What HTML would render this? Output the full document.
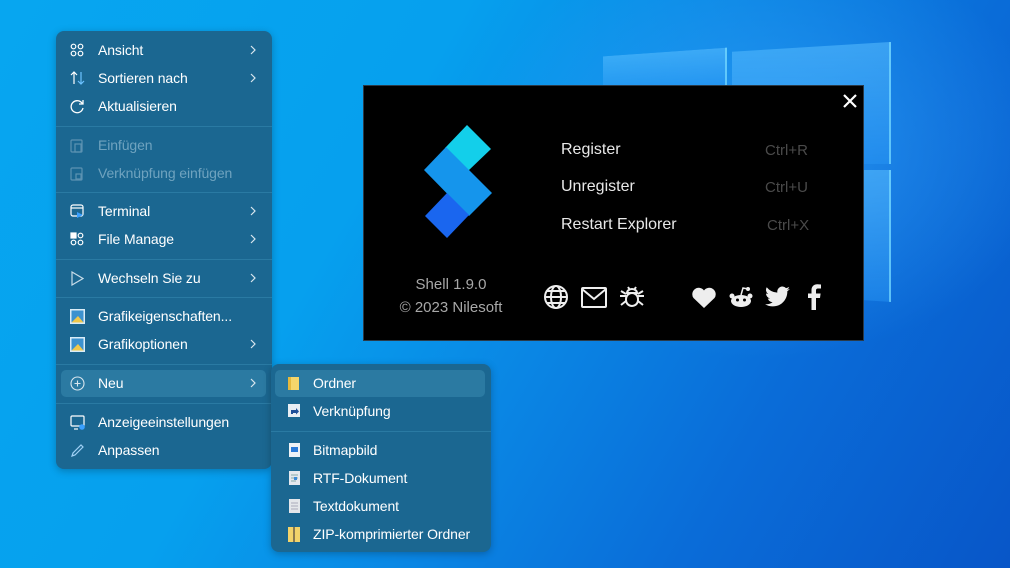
<!DOCTYPE html>
<html><head><meta charset="utf-8"><style>
*{margin:0;padding:0;box-sizing:border-box}
body{width:1010px;height:568px;overflow:hidden;position:relative;font-family:"Liberation Sans",sans-serif;
background:
radial-gradient(ellipse 420px 300px at 760px 150px, rgba(60,170,255,0.55), rgba(0,0,0,0) 70%),
linear-gradient(120deg,#07a6f0 0%,#06a0ee 35%,#0a86e4 55%,#0a6cd8 75%,#0856c8 100%);}
.pane{position:absolute;background:linear-gradient(180deg,rgba(90,190,255,0.55),rgba(40,150,245,0.45));border-right:2px solid rgba(120,220,255,0.7)}
.menu{position:absolute;background:#1b6791;border-radius:8px;box-shadow:0 2px 8px rgba(0,0,0,0.25);color:#fff}
.it{position:absolute;left:0;right:0;height:28px;font-size:14px;line-height:28px;letter-spacing:-0.1px}
.it .t{position:absolute;left:42px}
.it svg{position:absolute;left:14px;top:7px}
.it svg.ch{left:auto;right:16px;top:9px}
.dis{color:#6fa3bf}
.sep{position:absolute;left:0;right:0;height:1px;background:#2a7aa3}
.hl{position:absolute;background:#2b7aa2;border-radius:5px}
.dlg{position:absolute;left:363px;top:85px;width:501px;height:256px;background:#000;border:1px solid #2a3a48}
.dt{position:absolute;color:#e8e8e8;font-size:16px}
.ds{position:absolute;color:#4a4a4a;font-size:15px}
.ic{position:absolute}
</style></head><body>
<div class="pane" style="left:603px;top:52px;width:124px;height:40px;transform:skewY(-4deg)"></div>
<div class="pane" style="left:732px;top:42px;width:159px;height:122px;clip-path:polygon(0 8%,100% 0,100% 100%,0 100%)"></div>
<div class="pane" style="left:732px;top:170px;width:159px;height:132px;clip-path:polygon(0 0,100% 0,100% 100%,0 92%)"></div>

<div class="menu" style="left:56px;top:31px;width:216px;height:438px">
 <div class="it" style="top:5px"><svg width="14" height="14" viewBox="0 0 14 14" fill="none" stroke="#fff" stroke-width="1.2"><circle cx="3.5" cy="3.5" r="2.3"/><circle cx="10.5" cy="3.5" r="2.3"/><circle cx="3.5" cy="10.5" r="2.3"/><circle cx="10.5" cy="10.5" r="2.3"/></svg><span class="t">Ansicht</span><svg class="ch" width="6" height="10" viewBox="0 0 6 10" fill="none" stroke="#d8e6ee" stroke-width="1.2"><path d="M1 1l4 4-4 4"/></svg></div>
 <div class="it" style="top:33px"><svg width="16" height="14" viewBox="0 0 16 14" fill="none" stroke="#fff" stroke-width="1.2"><path d="M4 13V1M1 4l3-3 3 3"/><path d="M11 1v12M8 10l3 3 3-3" stroke="#6cc2ff"/></svg><span class="t">Sortieren nach</span><svg class="ch" width="6" height="10" viewBox="0 0 6 10" fill="none" stroke="#d8e6ee" stroke-width="1.2"><path d="M1 1l4 4-4 4"/></svg></div>
 <div class="it" style="top:61px"><svg width="15" height="15" viewBox="0 0 15 15" fill="none" stroke="#fff" stroke-width="1.3"><path d="M12.5 5A6 6 0 1 0 13 9"/><path d="M13 1v4H9"/></svg><span class="t">Aktualisieren</span></div>
 <div class="sep" style="top:95px"></div>
 <div class="it dis" style="top:100px"><svg width="14" height="15" viewBox="0 0 14 15" fill="none" stroke="#5d93b2" stroke-width="1.2"><rect x="1" y="2" width="11" height="12" rx="1"/><rect x="5" y="6" width="6" height="8"/></svg><span class="t">Einfügen</span></div>
 <div class="it dis" style="top:128px"><svg width="14" height="15" viewBox="0 0 14 15" fill="none" stroke="#5d93b2" stroke-width="1.2"><rect x="1" y="2" width="11" height="12" rx="1"/><rect x="6" y="8" width="5" height="5"/></svg><span class="t">Verknüpfung einfügen</span></div>
 <div class="sep" style="top:161px"></div>
 <div class="it" style="top:166px"><svg width="15" height="15" viewBox="0 0 15 15" fill="none" stroke="#fff" stroke-width="1.2"><rect x="1" y="1" width="12" height="11" rx="2"/><path d="M1 4h12"/><path d="M7 8l6 3-6 3z" fill="#3aa0ff" stroke="none"/></svg><span class="t">Terminal</span><svg class="ch" width="6" height="10" viewBox="0 0 6 10" fill="none" stroke="#d8e6ee" stroke-width="1.2"><path d="M1 1l4 4-4 4"/></svg></div>
 <div class="it" style="top:194px"><svg width="14" height="14" viewBox="0 0 14 14" fill="none" stroke="#fff" stroke-width="1.2"><rect x="1" y="1" width="5" height="5" fill="#fff"/><circle cx="10.5" cy="3.5" r="2.3"/><circle cx="3.5" cy="10.5" r="2.3"/><circle cx="10.5" cy="10.5" r="2.3"/></svg><span class="t">File Manage</span><svg class="ch" width="6" height="10" viewBox="0 0 6 10" fill="none" stroke="#d8e6ee" stroke-width="1.2"><path d="M1 1l4 4-4 4"/></svg></div>
 <div class="sep" style="top:228px"></div>
 <div class="it" style="top:233px"><svg width="14" height="15" viewBox="0 0 14 15" fill="none" stroke="#c8dce8" stroke-width="1.2"><path d="M2 1l11 6.5L2 14z"/></svg><span class="t">Wechseln Sie zu</span><svg class="ch" width="6" height="10" viewBox="0 0 6 10" fill="none" stroke="#d8e6ee" stroke-width="1.2"><path d="M1 1l4 4-4 4"/></svg></div>
 <div class="sep" style="top:266px"></div>
 <div class="it" style="top:271px"><svg width="15" height="15" viewBox="0 0 15 15"><rect x="0" y="0" width="15" height="15" fill="#d9ecf7"/><rect x="1.5" y="1.5" width="12" height="12" fill="#3c92cf"/><path d="M1.5 13.5L8 7l5.5 6.5z" fill="#f1c84a"/></svg><span class="t">Grafikeigenschaften...</span></div>
 <div class="it" style="top:299px"><svg width="15" height="15" viewBox="0 0 15 15"><rect x="0" y="0" width="15" height="15" fill="#d9ecf7"/><rect x="1.5" y="1.5" width="12" height="12" fill="#3c92cf"/><path d="M1.5 13.5L8 7l5.5 6.5z" fill="#f1c84a"/></svg><span class="t">Grafikoptionen</span><svg class="ch" width="6" height="10" viewBox="0 0 6 10" fill="none" stroke="#d8e6ee" stroke-width="1.2"><path d="M1 1l4 4-4 4"/></svg></div>
 <div class="sep" style="top:333px"></div>
 <div class="hl" style="left:5px;top:339px;width:205px;height:27px"></div>
 <div class="it" style="top:338px"><svg width="15" height="15" viewBox="0 0 15 15" fill="none" stroke="#d8e6ee" stroke-width="1.1"><circle cx="7.5" cy="7.5" r="6.5"/><path d="M7.5 4.5v6M4.5 7.5h6"/></svg><span class="t">Neu</span><svg class="ch" width="6" height="10" viewBox="0 0 6 10" fill="none" stroke="#d8e6ee" stroke-width="1.2"><path d="M1 1l4 4-4 4"/></svg></div>
 <div class="sep" style="top:372px"></div>
 <div class="it" style="top:377px"><svg width="16" height="15" viewBox="0 0 16 15" fill="none" stroke="#fff" stroke-width="1.2"><rect x="1" y="1" width="13" height="10" rx="1"/><path d="M4 14h4"/><circle cx="12" cy="12" r="2.8" fill="#3aa0ff" stroke="none"/></svg><span class="t">Anzeigeeinstellungen</span></div>
 <div class="it" style="top:405px"><svg width="15" height="15" viewBox="0 0 15 15" fill="none" stroke="#9fd0f5" stroke-width="1.2"><path d="M2 13l1-3 8-8 2 2-8 8z"/></svg><span class="t">Anpassen</span></div>
</div>

<div class="menu" style="left:271px;top:364px;width:220px;height:188px">
 <div class="hl" style="left:4px;top:6px;width:210px;height:27px"></div>
 <div class="it" style="top:5px"><svg width="12" height="15" viewBox="0 0 12 15" style="left:17px"><rect x="0" y="1" width="11" height="13" fill="#f5d66b"/><rect x="0" y="1" width="3" height="13" fill="#e5b93d"/></svg><span class="t">Ordner</span></div>
 <div class="it" style="top:33px"><svg width="12" height="13" viewBox="0 0 12 13" style="left:17px"><rect width="12" height="13" fill="#e8eef4"/><path d="M3 10V6h5V4l3 3.5-3 3V9H5v1z" fill="#1e4f99"/></svg><span class="t">Verknüpfung</span></div>
 <div class="sep" style="top:67px"></div>
 <div class="it" style="top:72px"><svg width="11" height="14" viewBox="0 0 11 14" style="left:18px"><rect width="11" height="14" fill="#eef2f6"/><rect x="2" y="4" width="7" height="5" fill="#2a7ad8"/></svg><span class="t">Bitmapbild</span></div>
 <div class="it" style="top:100px"><svg width="11" height="14" viewBox="0 0 11 14" style="left:18px"><rect width="11" height="14" fill="#e4e8ee"/><path d="M2 4h7M2 7h7M2 10h5" stroke="#8aa" stroke-width="1"/><rect x="5" y="6" width="3" height="3" fill="#3b8ad8"/></svg><span class="t">RTF-Dokument</span></div>
 <div class="it" style="top:128px"><svg width="11" height="14" viewBox="0 0 11 14" style="left:18px"><rect width="11" height="14" fill="#e4e6ea"/><path d="M2 4h7M2 7h7M2 10h7" stroke="#aab" stroke-width="1"/></svg><span class="t">Textdokument</span></div>
 <div class="it" style="top:156px"><svg width="12" height="15" viewBox="0 0 12 15" style="left:17px"><rect width="12" height="15" fill="#f2d36a"/><rect x="5" y="0" width="2" height="15" fill="#8a7a50"/></svg><span class="t">ZIP-komprimierter Ordner</span></div>
</div>

<div class="dlg">
 <svg class="ic" style="left:479px;top:8px" width="14" height="14" viewBox="0 0 14 14" stroke="#fff" stroke-width="2.2"><path d="M1 1l12 12M13 1L1 13"/></svg>
 <svg class="ic" style="left:60px;top:38px" width="72" height="116" viewBox="426 124 72 116">
  <polygon points="469,125 493,149 470,171 447,148" fill="#13cfea"/>
  <polygon points="448,147 494,193 471,216 426,170" fill="#1595ec"/>
  <polygon points="449,193 471,215 449,238 427,216" fill="#1a66ef"/>
 </svg>
 <div class="dt" style="left:197px;top:55px">Register</div>
 <div class="dt" style="left:197px;top:92px">Unregister</div>
 <div class="dt" style="left:197px;top:130px">Restart Explorer</div>
 <div class="ds" style="left:401px;top:56px">Ctrl+R</div>
 <div class="ds" style="left:401px;top:93px">Ctrl+U</div>
 <div class="ds" style="left:403px;top:131px">Ctrl+X</div>
 <div style="position:absolute;left:20px;width:134px;top:187px;text-align:center;color:#a8a8a8;font-size:15px;line-height:23px">Shell 1.9.0<br>© 2023 Nilesoft</div>
 <svg class="ic" style="left:179px;top:198px" width="26" height="26" viewBox="0 0 26 26" fill="none" stroke="#eee" stroke-width="2"><circle cx="13" cy="13" r="11"/><ellipse cx="13" cy="13" rx="5" ry="11"/><path d="M2 13h22M4 7h18M4 19h18"/></svg>
 <svg class="ic" style="left:217px;top:201px" width="26" height="21" viewBox="0 0 26 21" fill="none" stroke="#eee" stroke-width="2"><rect x="1" y="1" width="24" height="19" rx="1"/><path d="M1 2l12 10 12-10"/></svg>
 <svg class="ic" style="left:255px;top:198px" width="26" height="26" viewBox="0 0 26 26" fill="none" stroke="#eee" stroke-width="2"><path d="M8 9a5 4 0 0 1 10 0z"/><rect x="7" y="9" width="12" height="13" rx="6"/><path d="M9 3l2 3M17 3l-2 3M1 12h6M19 12h6M2 7l5 3M24 7l-5 3M2 21l5-4M24 21l-5-4"/></svg>
 <svg class="ic" style="left:327px;top:201px" width="26" height="22" viewBox="0 0 26 22"><path d="M13 21L2.5 11A6 6 0 0 1 13 3.5 6 6 0 0 1 23.5 11z" fill="#eee"/></svg>
 <svg class="ic" style="left:364px;top:198px" width="26" height="26" viewBox="0 0 26 26" fill="#eee"><ellipse cx="13" cy="17" rx="10" ry="6"/><circle cx="4" cy="12" r="2.5"/><circle cx="22" cy="12" r="2.5"/><path d="M13 11l2-7 5 1" stroke="#eee" stroke-width="1.5" fill="none"/><circle cx="20" cy="5" r="2"/><circle cx="9.5" cy="16" r="1.5" fill="#000"/><circle cx="16.5" cy="16" r="1.5" fill="#000"/></svg>
 <svg class="ic" style="left:401px;top:200px" width="26" height="22" viewBox="0 0 24 20"><path d="M23 2.5a9 9 0 0 1-2.7.8A4.7 4.7 0 0 0 22.4.7a9.5 9.5 0 0 1-3 1.1A4.7 4.7 0 0 0 11.4 6 13.4 13.4 0 0 1 1.600 1 4.7 4.7 0 0 0 3 7.3a4.7 4.7 0 0 1-2.1-.6 4.7 4.7 0 0 0 3.8 4.6 4.7 4.7 0 0 1-2.1.1 4.7 4.7 0 0 0 4.4 3.3A9.5 9.5 0 0 1 0 16.6 13.3 13.3 0 0 0 7.2 18.7c8.7 0 13.4-7.200 13.4-13.4v-.6A9.6 9.6 0 0 0 23 2.5z" fill="#eee"/></svg>
 <svg class="ic" style="left:443px;top:198px" width="14" height="26" viewBox="0 0 14 26"><path d="M9 26V14h4l.6-4.5H9V6.7c0-1.3.4-2.2 2.2-2.2H14V.5A33 33 0 0 0 10.3.3C7 .3 4.5 2.4 4.5 6.1v3.4H1V14h3.5v12z" fill="#eee"/></svg>
</div>
</body></html>
